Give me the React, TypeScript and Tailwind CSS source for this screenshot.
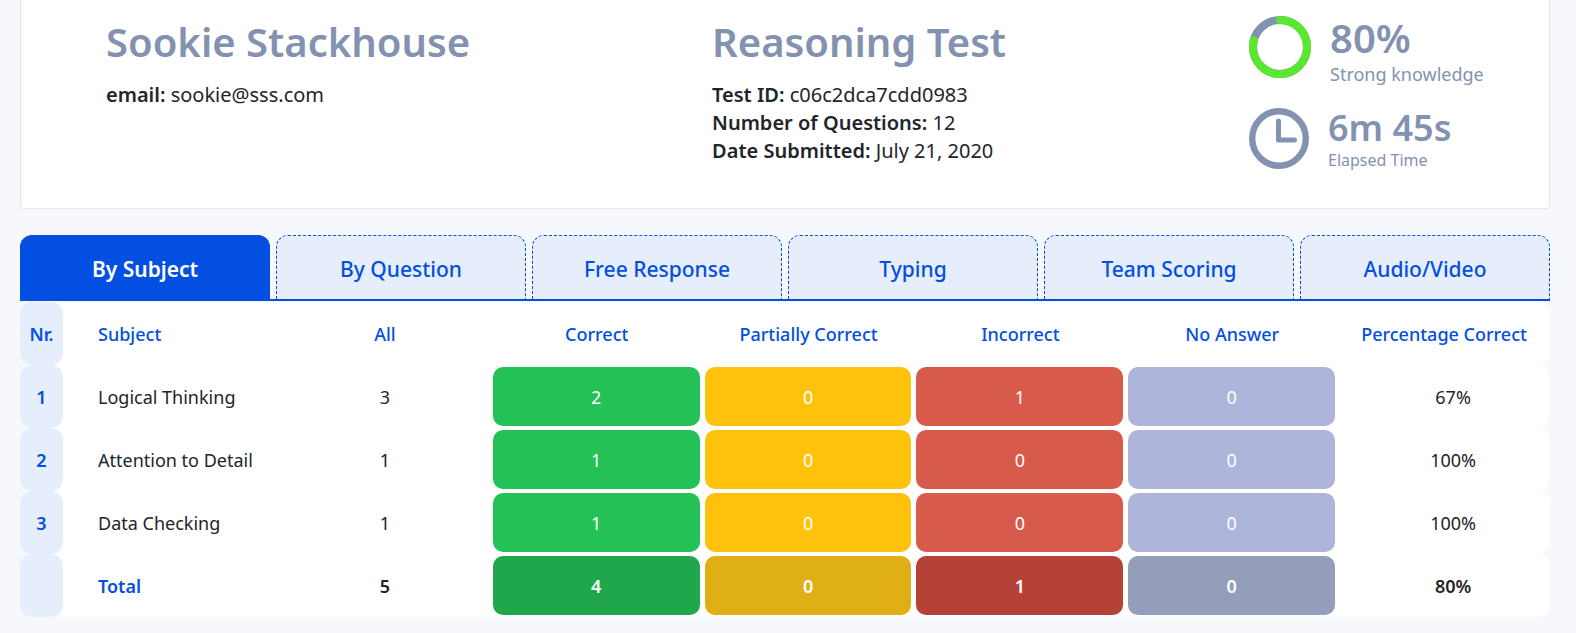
import { useState } from "react";

const tabs = ["By Subject", "By Question", "Free Response", "Typing", "Team Scoring", "Audio/Video"];

const rows = [
  { subject: "Logical Thinking", all: 3, correct: 2, partial: 0, incorrect: 1, none: 0, percent: 67 },
  { subject: "Attention to Detail", all: 1, correct: 1, partial: 0, incorrect: 0, none: 0, percent: 100 },
  { subject: "Data Checking", all: 1, correct: 1, partial: 0, incorrect: 0, none: 0, percent: 100 },
];

function Score({ value, color }: { value: number; color: string }) {
  return (
    <td className="py-0.5 pl-0.5 pr-[3px]">
      <div className={`flex h-[59px] items-center justify-center rounded-[10px] text-white ${color}`}>{value}</div>
    </td>
  );
}

function RowNumber({ children }: { children?: React.ReactNode }) {
  return (
    <div className="flex h-[63px] items-center justify-center rounded-xl bg-[#e6eefc] font-semibold text-[#034fe2]">
      {children}
    </div>
  );
}

function ScoreRing() {
  return (
    <svg className="size-[62px] shrink-0" viewBox="0 0 62 62" fill="none" strokeWidth={8}>
      <circle cx="31" cy="31" r="27" stroke="#8392b0" />
      <circle
        cx="31"
        cy="31"
        r="27"
        stroke="#59e72f"
        strokeLinecap="round"
        pathLength={100}
        strokeDasharray="79 100"
        transform="rotate(-90 31 31)"
      />
    </svg>
  );
}

function ClockIcon() {
  return (
    <svg className="h-[62px] w-[60px] shrink-0" viewBox="0 0 60 62" fill="none" stroke="#8392b0">
      <ellipse cx="30" cy="30.5" rx="26.800" ry="27.300" strokeWidth={6.4} />
      <path d="M29.500 13V32H45.500" strokeWidth={5} strokeLinecap="round" strokeLinejoin="round" />
    </svg>
  );
}

export default function App() {
  const [active, setActive] = useState("By Subject");

  return (
    <div className="min-h-screen bg-[#f6f8fc] pb-4 pl-5 pr-[26px] font-['Noto_Sans',sans-serif] text-[#212529]">
      {/* Summary */}
      <header className="flex rounded-b border border-t-0 border-[#e3e6ec] bg-white pb-9 pl-[85px] text-xl leading-7">
        <section className="w-[42%] pt-[15px]">
          <h1 className="text-[40px] font-semibold leading-[54px] text-[#8392b0]">Sookie Stackhouse</h1>
          <p className="mt-3">
            <strong className="font-semibold">email:</strong> sookie@sss.com
          </p>
        </section>
        <section className="flex-1 pt-[15px]">
          <h2 className="text-[40px] font-semibold leading-[54px] text-[#8392b0]">Reasoning Test</h2>
          <p className="mt-3">
            <strong className="font-semibold">Test ID:</strong> c06c2dca7cdd0983
          </p>
          <p>
            <strong className="font-semibold">Number of Questions:</strong> 12
          </p>
          <p>
            <strong className="font-semibold">Date Submitted:</strong> July 21, 2020
          </p>
        </section>
        <section className="w-[300px] pt-4 text-[#8392b0]">
          <div className="flex h-[92px] items-start gap-[19px]">
            <ScoreRing />
            <div>
              <p className="text-[40px] font-semibold leading-11">80%</p>
              <p className="text-lg leading-7">Strong knowledge</p>
            </div>
          </div>
          <div className="flex items-start gap-[19px]">
            <ClockIcon />
            <div>
              <p className="text-4xl font-semibold leading-10">6m 45s</p>
              <p className="text-base leading-6">Elapsed Time</p>
            </div>
          </div>
        </section>
      </header>

      {/* Tabs */}
      <div role="tablist" className="mt-[26px] flex gap-1.5 border-b-2 border-[#034fe2]">
        {tabs.map((tab) => (
          <button
            key={tab}
            type="button"
            role="tab"
            aria-selected={tab === active}
            onClick={() => setActive(tab)}
            className={
              tab === active
                ? "h-16 flex-1 rounded-t-xl border border-b-0 border-[#034fe2] bg-[#034fe2] pt-1 text-[21px] font-semibold text-white"
                : "h-16 flex-1 rounded-t-xl border border-b-0 border-dashed border-[#034fe2] bg-[#e6eefc] pt-1 text-[21px] font-medium text-[#034fe2]"
            }
          >
            {tab}
          </button>
        ))}
      </div>

      {/* Results by subject */}
      <div className="pt-px">
        <table className="w-full table-fixed border-separate border-spacing-0 text-center text-lg leading-6">
          <colgroup>
            <col className="w-[43px]" />
            <col className="w-[216px]" />
            <col />
            <col />
            <col />
            <col />
            <col />
            <col />
          </colgroup>
          <thead>
            <tr className="text-[#034fe2] *:bg-white *:font-medium">
              <th className="rounded-l-xl">
                <RowNumber>Nr.</RowNumber>
              </th>
              <th className="pl-[35px] text-left">Subject</th>
              <th>All</th>
              <th>Correct</th>
              <th>Partially Correct</th>
              <th>Incorrect</th>
              <th>No Answer</th>
              <th className="rounded-r-xl whitespace-nowrap">Percentage Correct</th>
            </tr>
          </thead>
          <tbody>
            {rows.map((row, i) => (
              <tr key={row.subject} className="*:bg-white">
                <td className="rounded-l-xl">
                  <RowNumber>{i + 1}</RowNumber>
                </td>
                <td className="pl-[35px] text-left">{row.subject}</td>
                <td>{row.all}</td>
                <Score value={row.correct} color="bg-[#24c157]" />
                <Score value={row.partial} color="bg-[#fec20c]" />
                <Score value={row.incorrect} color="bg-[#d85a4b]" />
                <Score value={row.none} color="bg-[#adb5da]" />
                <td className="rounded-r-xl pl-[18px]">{row.percent}%</td>
              </tr>
            ))}
          </tbody>
          <tfoot>
            <tr className="font-semibold *:bg-white">
              <td className="rounded-l-xl">
                <RowNumber />
              </td>
              <td className="pl-[35px] text-left text-[#034fe2]">Total</td>
              <td>5</td>
              <Score value={4} color="bg-[#20a64b]" />
              <Score value={0} color="bg-[#e0ae15]" />
              <Score value={1} color="bg-[#b54236]" />
              <Score value={0} color="bg-[#949db9]" />
              <td className="rounded-r-xl pl-[18px]">80%</td>
            </tr>
          </tfoot>
        </table>
      </div>
    </div>
  );
}
